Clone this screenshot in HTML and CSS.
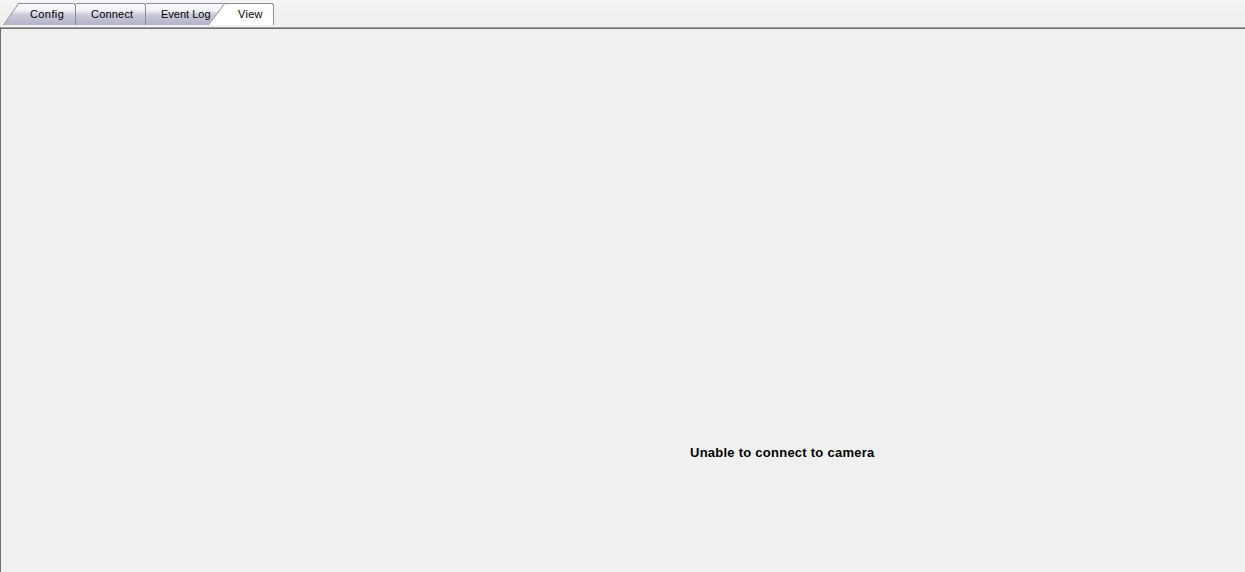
FILE: index.html
```html
<!DOCTYPE html>
<html>
<head>
<meta charset="utf-8">
<link rel="stylesheet" href="styles.css">
</head>
<body>
<div class="app">
  <div class="tabbar">
    <div class="tab tab-config first">Config</div>
    <div class="tab tab-connect">Connect</div>
    <div class="tab tab-event">Event Log</div>
    <div class="tab tab-view active">View</div>
  </div>
  <div class="panel">
    <div class="message">Unable to connect to camera</div>
  </div>
</div>
</body>
</html>
```
FILE: styles.css
```css
html, body {
  margin: 0;
  padding: 0;
  width: 1245px;
  height: 572px;
  overflow: hidden;
  background: #f0f0f0;
}

.app {
  display: flex;
  flex-direction: column;
  height: 572px;
}

.tabbar {
  display: flex;
  align-items: flex-start;
  height: 24px;
  padding: 3px 0 0 18px;
  background: linear-gradient(#f6f6f9, #f0f0f0 40%);
  box-sizing: content-box;
}

.tab {
  position: relative;
  box-sizing: border-box;
  height: 22px;
  padding-top: 3px;
  font-family: "Liberation Sans", Arial, sans-serif;
  font-size: 11px;
  line-height: 14px;
  color: #000;
  border-top: 1px solid #8a8d96;
  border-right: 1px solid #8a8d96;
  border-top-right-radius: 3px;
  background: linear-gradient(#fbfbfd 0%, #f2f2f6 30%, #c9c9d9 52%, #b3b3c8 100%);
  white-space: nowrap;
}

.tab-config { width: 58px; padding-left: 12px; letter-spacing: 0.4px; }
.tab-connect { width: 70px; padding-left: 15px; letter-spacing: 0.2px; }
.tab-event { width: 79px; padding-left: 15px; }
.tab-view { width: 49px; padding-left: 13px; letter-spacing: 0.3px; }

.tab.active {
  background: #ffffff;
  z-index: 2;
}

.tab.first::before,
.tab.active::before {
  content: "";
  position: absolute;
  top: -1px;
  left: -17px;
  width: 18px;
  height: 22px;
  border-top: 1px solid #8a8d96;
  border-left: 1px solid #8a8d96;
  box-sizing: border-box;
  transform-origin: bottom left;
  transform: skewX(-37deg);
  border-right: 0;
}

.tab.first::before {
  left: -15px;
  transform: skewX(-35deg);
  background: linear-gradient(#fbfbfd 0%, #f2f2f6 30%, #c9c9d9 52%, #b3b3c8 100%);
}

.tab.active::before {
  background: #ffffff;
}

.panel {
  flex: 1;
  display: flex;
  flex-direction: column;
  align-items: flex-start;
  border-top: 1px solid #a0a0a0;
  border-left: 1px solid #6d6d6d;
  box-shadow: inset 0 1px 0 #6d6d6d;
  background: #f0f0f0;
  padding: 417px 0 0 689px;
}

.message {
  font-family: "Liberation Sans", Arial, sans-serif;
  font-size: 13px;
  font-weight: bold;
  line-height: 16px;
  color: #000;
  letter-spacing: 0.25px;
}
```
